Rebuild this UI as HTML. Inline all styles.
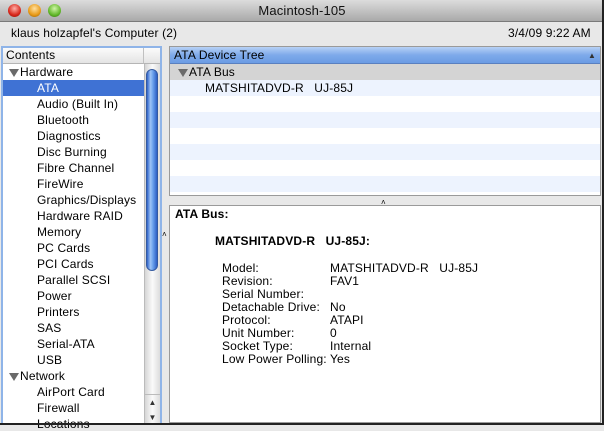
<!DOCTYPE html>
<html><head><style>
*{margin:0;padding:0;box-sizing:border-box}
body{width:604px;height:425px;overflow:hidden;background:#e8e8e8;font-family:"Liberation Sans",sans-serif;font-size:12px;letter-spacing:0.15px;color:#000;position:relative}
.abs{position:absolute}
.t{position:absolute;white-space:nowrap;line-height:13px}
.tri{display:inline-block;width:0;height:0;border-left:5px solid transparent;border-right:5px solid transparent;border-top:8px solid #6a6a6a;margin-right:1px;vertical-align:-1px}
</style></head><body>
<div class="abs" style="left:0;top:0;width:604px;height:22px;background:linear-gradient(#dcdcdc,#a9a9a9);border-bottom:1px solid #7a7a7a"></div>
<div class="abs" style="left:8px;top:4px;width:13px;height:13px;border-radius:50%;background:radial-gradient(circle at 50% 35%,#ffb0a8,#d8271b 60%,#8a120a);"></div>
<div class="abs" style="left:28px;top:4px;width:13px;height:13px;border-radius:50%;background:radial-gradient(circle at 50% 35%,#ffe0a0,#e89a18 60%,#935a05);"></div>
<div class="abs" style="left:48px;top:4px;width:13px;height:13px;border-radius:50%;background:radial-gradient(circle at 50% 35%,#d0f5a8,#62b82a 60%,#2f6d0d);"></div>
<div class="t" style="left:0;width:604px;text-align:center;top:3px;font-size:13px;line-height:16px;color:#111">Macintosh-105</div>
<div class="t" style="left:11px;top:27px">klaus holzapfel's Computer (2)</div>
<div class="t" style="left:508px;top:27px">3/4/09 9:22 AM</div>
<!-- left pane -->
<div class="abs" style="left:1px;top:46px;width:161px;height:379px;border:2px solid #8fb4e8;border-bottom:none;background:#fff"></div>
<div class="abs" style="left:3px;top:48px;width:141px;height:16px;background:linear-gradient(#fbfbfb,#e4e4e4);border-bottom:1px solid #b5b5b5;border-right:1px solid #c0c0c0"></div>
<div class="abs" style="left:144px;top:48px;width:16px;height:16px;background:linear-gradient(#fbfbfb,#e4e4e4);border-bottom:1px solid #b5b5b5"></div>
<div class="t" style="left:6px;top:49px">Contents</div>
<div class="abs" style="left:3px;top:80px;width:141px;height:16px;background:#3f72d4"></div>
<div class="abs" style="left:144px;top:64px;width:16px;height:361px;background:linear-gradient(90deg,#d6d6d6,#fafafa 50%,#dcdcdc);border-left:1px solid #bbb"></div>
<div class="abs" style="left:146px;top:69px;width:12px;height:202px;border-radius:6px;background:linear-gradient(90deg,#2f62c8,#9ec4f6 35%,#6aa0ec 60%,#2d5fc4);border:1px solid #345aa0"></div>
<div class="abs" style="left:145px;top:394px;width:15px;height:31px;border-top:1px solid #bbb;font-size:8px;color:#333;text-align:center;line-height:15px">▲<br>▼</div>
<div class="t" style="left:9px;top:66px"><span class="tri"></span>Hardware</div>
<div class="t" style="left:37px;top:82px;color:#fff">ATA</div>
<div class="t" style="left:37px;top:98px">Audio (Built In)</div>
<div class="t" style="left:37px;top:114px">Bluetooth</div>
<div class="t" style="left:37px;top:130px">Diagnostics</div>
<div class="t" style="left:37px;top:146px">Disc Burning</div>
<div class="t" style="left:37px;top:162px">Fibre Channel</div>
<div class="t" style="left:37px;top:178px">FireWire</div>
<div class="t" style="left:37px;top:194px">Graphics/Displays</div>
<div class="t" style="left:37px;top:210px">Hardware RAID</div>
<div class="t" style="left:37px;top:226px">Memory</div>
<div class="t" style="left:37px;top:242px">PC Cards</div>
<div class="t" style="left:37px;top:258px">PCI Cards</div>
<div class="t" style="left:37px;top:274px">Parallel SCSI</div>
<div class="t" style="left:37px;top:290px">Power</div>
<div class="t" style="left:37px;top:306px">Printers</div>
<div class="t" style="left:37px;top:322px">SAS</div>
<div class="t" style="left:37px;top:338px">Serial-ATA</div>
<div class="t" style="left:37px;top:354px">USB</div>
<div class="t" style="left:9px;top:370px"><span class="tri"></span>Network</div>
<div class="t" style="left:37px;top:386px">AirPort Card</div>
<div class="t" style="left:37px;top:402px">Firewall</div>
<div class="t" style="left:37px;top:418px">Locations</div>
<div class="t" style="left:162px;top:228px;font-size:8px">˄</div>
<!-- right tree -->
<div class="abs" style="left:169px;top:46px;width:432px;height:150px;border:1px solid #9a9a9a;background:#fff"></div>
<div class="abs" style="left:170px;top:47px;width:430px;height:17px;background:linear-gradient(#b7d2f6,#7eaaea 50%,#6b9ce4);border-bottom:1px solid #5a80c0"></div>
<div class="t" style="left:174px;top:49px">ATA Device Tree</div>
<div class="t" style="left:588px;top:49px;font-size:8px;color:#333">▲</div>
<div class="abs" style="left:170px;top:64px;width:430px;height:16px;background:#d4d4d4"></div>
<div class="t" style="left:178px;top:66px"><span class="tri"></span>ATA Bus</div>
<div class="abs" style="left:170px;top:80px;width:430px;height:16px;background:#edf3fe"></div>
<div class="abs" style="left:170px;top:112px;width:430px;height:16px;background:#edf3fe"></div>
<div class="abs" style="left:170px;top:144px;width:430px;height:16px;background:#edf3fe"></div>
<div class="abs" style="left:170px;top:176px;width:430px;height:16px;background:#edf3fe"></div>
<div class="t" style="left:205px;top:82px">MATSHITADVD-R&nbsp;&nbsp;&nbsp;UJ-85J</div>
<div class="t" style="left:381px;top:196px;font-size:8px">˄</div>
<!-- detail -->
<div class="abs" style="left:169px;top:205px;width:432px;height:218px;border:1px solid #9a9a9a;background:#fff"></div>
<div class="t" style="left:175px;top:208px;font-weight:bold">ATA Bus:</div>
<div class="t" style="left:215px;top:235px;font-weight:bold">MATSHITADVD-R&nbsp;&nbsp;&nbsp;UJ-85J:</div>
<div class="t" style="left:222px;top:262px;line-height:13px">Model:<br>Revision:<br>Serial Number:<br>Detachable Drive:<br>Protocol:<br>Unit Number:<br>Socket Type:<br>Low Power Polling:</div>
<div class="t" style="left:330px;top:262px;line-height:13px">MATSHITADVD-R&nbsp;&nbsp;&nbsp;UJ-85J<br>FAV1<br>&nbsp;<br>No<br>ATAPI<br>0<br>Internal<br>Yes</div>
<div class="abs" style="left:602px;top:0;width:2px;height:425px;background:#222"></div>
<div class="abs" style="left:0;top:423px;width:604px;height:2px;background:#222"></div>
</body></html>
